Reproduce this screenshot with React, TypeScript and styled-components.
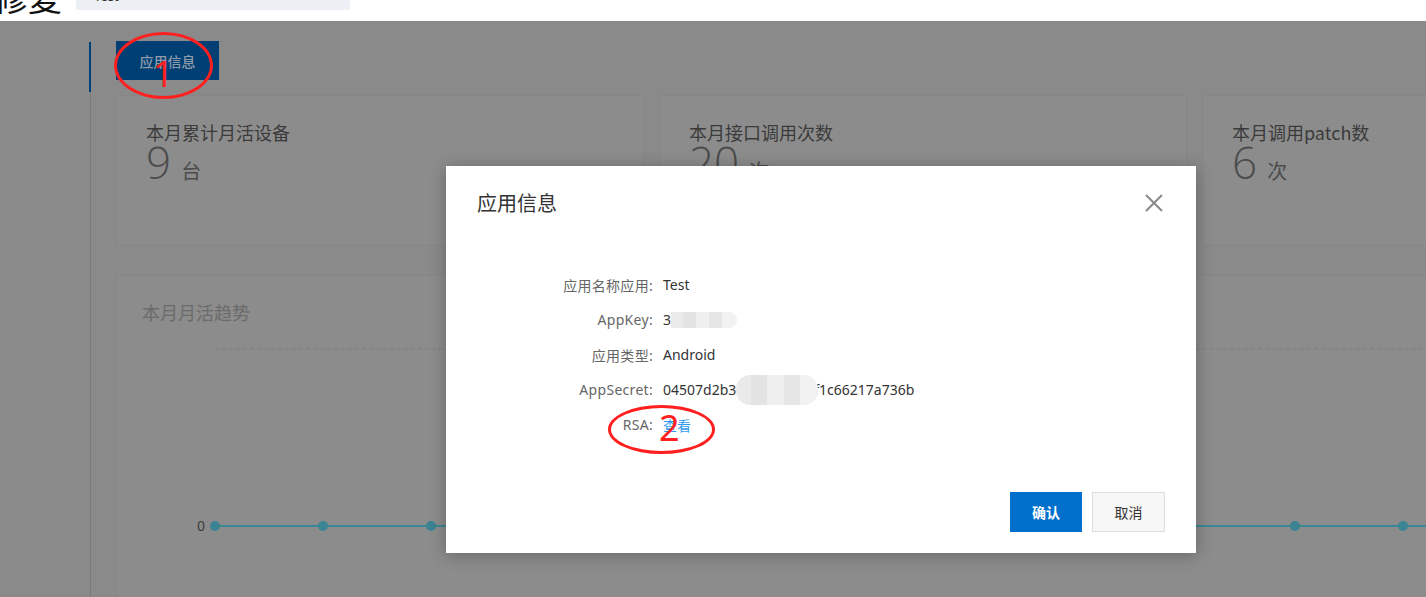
import React from 'react';
import styled, { createGlobalStyle } from 'styled-components';

const GlobalStyle = createGlobalStyle`
  html, body {
    margin: 0;
    padding: 0;
    width: 100%;
    height: 100%;
    overflow: hidden;
    background: #ffffff;
    font-family: 'Noto Sans', 'Noto Sans CJK SC', sans-serif;
  }
  * { box-sizing: border-box; }
`;

const TopStrip = styled.div`
  height: 21px;
  display: flex;
  align-items: flex-start;
  overflow: hidden;
  background: #ffffff;
`;

const PageTitle = styled.div`
  font-size: 34px;
  line-height: 34px;
  margin: -20px 0 0 -6px;
  color: #111;
  font-family: 'Noto Sans CJK SC', sans-serif;
`;

const SearchBox = styled.div`
  width: 274px;
  height: 10px;
  margin-left: 14px;
  background: #eceff4;
  overflow: hidden;
  padding-left: 18px;
  font-size: 13px;
  line-height: 13px;
  color: #333;
  span { display: block; margin-top: -10px; }
`;

const Stage = styled.div`
  position: relative;
  height: calc(100vh - 21px);
  display: flex;
  overflow: hidden;
  background: #8a8a8a;
`;

const Gutter = styled.div`
  width: 89px;
  flex-shrink: 0;
`;

const Rail = styled.div`
  width: 2px;
  margin-top: 21px;
  flex-shrink: 0;
  background: linear-gradient(#00417a, #00417a) top / 2px 50px no-repeat,
    linear-gradient(#7b7b7b, #7b7b7b) 1px 0 / 1px 100% no-repeat;
`;

const Content = styled.div`
  flex: 1;
  min-width: 0;
  padding: 20px 0 0 25px;
  display: flex;
  flex-direction: column;
  overflow: hidden;
`;

const Tab = styled.div`
  width: 103px;
  height: 39px;
  background: #003f73;
  color: #8f9bab;
  font-size: 14px;
  font-weight: 500;
  display: flex;
  align-items: center;
  justify-content: center;
  font-family: 'Noto Sans CJK SC', sans-serif;
`;

const StatRow = styled.div`
  display: grid;
  grid-template-columns: repeat(3, 528px);
  gap: 15px;
  margin-top: 15px;
`;

const StatCard = styled.div`
  height: 151px;
  background: #8c8c8c;
  border: 1px solid #868686;
  padding: 24px 29px;
`;

const StatLabel = styled.div`
  font-size: 18px;
  line-height: 24px;
  color: #3b3b3b;
  font-family: 'Noto Sans CJK SC', sans-serif;
`;

const StatValue = styled.div`
  display: flex;
  align-items: baseline;
  gap: 10px;
  color: #4c4c4c;
  margin-top: -5px;
`;

const Num = styled.span`
  font-size: 44px;
  line-height: 46px;
  font-weight: 300;
  font-family: 'Open Sans', sans-serif;
`;

const Unit = styled.span`
  font-size: 20px;
  font-family: 'Noto Sans CJK SC', sans-serif;
`;

const ChartCard = styled.div`
  width: 1400px;
  margin-top: 29px;
  flex: 1;
  background: #8c8c8c;
  border: 1px solid #868686;
  border-bottom: none;
  padding-top: 26px;
`;

const ChartTitle = styled.div`
  padding-left: 25px;
  font-size: 18px;
  line-height: 20px;
  color: #6b6b6b;
  font-family: 'Noto Sans CJK SC', sans-serif;
`;

const ChartSvg = styled.svg`
  display: block;
  margin-left: -1px;
`;

const ModalLayer = styled.div`
  position: absolute;
  inset: 0;
  padding: 145px 0 0 446px;
`;

const Modal = styled.div`
  width: 750px;
  height: 387px;
  background: #ffffff;
  box-shadow: 0 2px 16px rgba(0, 0, 0, 0.28);
  padding: 25px 31px 21px 31px;
  display: flex;
  flex-direction: column;
`;

const ModalHeader = styled.div`
  display: flex;
  align-items: center;
  justify-content: space-between;
  height: 24px;
`;

const ModalTitle = styled.div`
  font-size: 20px;
  line-height: 22px;
  color: #333;
  font-family: 'Noto Sans CJK SC', sans-serif;
`;

const CloseButton = styled.button`
  border: none;
  background: none;
  padding: 0;
  margin-right: 1px;
  width: 20px;
  height: 20px;
  display: flex;
  align-items: center;
  justify-content: center;
  cursor: pointer;
`;

const InfoGrid = styled.div`
  display: grid;
  grid-template-columns: 176px 1fr;
  grid-auto-rows: 35px;
  column-gap: 10px;
  margin-top: 52px;
  align-items: center;
  font-size: 14px;
`;

const InfoLabel = styled.div`
  text-align: right;
  color: #666;
  font-family: 'Noto Sans', 'Noto Sans CJK SC', sans-serif;
  letter-spacing: 0.3px;
`;

const InfoValue = styled.div`
  color: #333;
  display: flex;
  align-items: center;
  white-space: nowrap;
  font-family: 'Noto Sans', 'Noto Sans CJK SC', sans-serif;
`;

const Blur = styled.span<{ $w: number; $h: number; $round?: boolean }>`
  position: relative;
  display: inline-block;
  width: ${p => p.$w}px;
  height: ${p => p.$h}px;
  border-radius: ${p => (p.$round ? '14px' : '0 8px 8px 0')};
  background: linear-gradient(
    90deg,
    #eaeaea 0 18%,
    #e3e3e3 18% 38%,
    #efefef 38% 58%,
    #e6e6e6 58% 78%,
    #f2f2f2 78% 100%
  );
`;

const LinkText = styled.a`
  color: #2e9bf0;
  text-decoration: none;
  cursor: pointer;
  font-family: 'Noto Sans CJK SC', sans-serif;
`;

const Footer = styled.div`
  margin-top: auto;
  display: flex;
  justify-content: flex-end;
  gap: 10px;
`;

const Button = styled.button<{ $primary?: boolean }>`
  height: 40px;
  width: ${p => (p.$primary ? '72px' : '73px')};
  font-size: 14px;
  font-family: 'Noto Sans CJK SC', sans-serif;
  font-weight: ${p => (p.$primary ? 600 : 400)};
  border: 1px solid ${p => (p.$primary ? '#0070cc' : '#dddddd')};
  background: ${p => (p.$primary ? '#0070cc' : '#f7f7f7')};
  color: ${p => (p.$primary ? '#ffffff' : '#333333')};
  cursor: pointer;
`;

const Ring = styled.div<{ $x: number; $y: number; $w: number; $h: number }>`
  position: absolute;
  left: ${p => p.$x}px;
  top: ${p => p.$y}px;
  width: ${p => p.$w}px;
  height: ${p => p.$h}px;
  border: 3px solid #ff1f1f;
  border-radius: 50%;
  pointer-events: none;
`;

const Mark = styled.div<{ $x: number; $y: number }>`
  position: absolute;
  left: ${p => p.$x}px;
  top: ${p => p.$y}px;
  font-size: 36px;
  line-height: 36px;
  color: #ff2020;
  font-family: 'Noto Sans', sans-serif;
  pointer-events: none;
`;

const stats = [
  { label: '本月累计月活设备', value: '9', unit: '台' },
  { label: '本月接口调用次数', value: '20', unit: '次' },
  { label: '本月调用patch数', value: '6', unit: '次' },
];

const points = Array.from({ length: 12 }, (_, i) => 99 + i * 108);

export default function App() {
  return (
    <>
      <GlobalStyle />
      <TopStrip>
        <PageTitle>修复</PageTitle>
        <SearchBox><span>Test</span></SearchBox>
      </TopStrip>
      <Stage>
        <Gutter />
        <Rail />
        <Content>
          <Tab>应用信息</Tab>
          <StatRow>
            {stats.map(s => (
              <StatCard key={s.label}>
                <StatLabel>{s.label}</StatLabel>
                <StatValue>
                  <Num>{s.value}</Num>
                  <Unit>{s.unit}</Unit>
                </StatValue>
              </StatCard>
            ))}
          </StatRow>
          <ChartCard>
            <ChartTitle>本月月活趋势</ChartTitle>
            <ChartSvg width="1400" height="260" viewBox="0 0 1400 260">
              <line x1="99" y1="27" x2="1400" y2="27" stroke="#7f7f7f" strokeDasharray="4 3" />
              <text x="89" y="209" textAnchor="end" fontSize="14" fill="#3a3a3a" fontFamily="Noto Sans, sans-serif">0</text>
              <line x1="99" y1="204" x2="1400" y2="204" stroke="#3a8797" strokeWidth="2" />
              {points.map(x => (
                <circle key={x} cx={x} cy="204" r="5" fill="#3a8494" />
              ))}
            </ChartSvg>
          </ChartCard>
        </Content>

        <ModalLayer>
          <Modal>
            <ModalHeader>
              <ModalTitle>应用信息</ModalTitle>
              <CloseButton aria-label="关闭">
                <svg width="18" height="18" viewBox="0 0 18 18">
                  <path d="M1 1 L17 17 M17 1 L1 17" stroke="#888" strokeWidth="2" fill="none" />
                </svg>
              </CloseButton>
            </ModalHeader>
            <InfoGrid>
              <InfoLabel>应用名称应用:</InfoLabel>
              <InfoValue>Test</InfoValue>
              <InfoLabel>AppKey:</InfoLabel>
              <InfoValue>3<Blur $w={66} $h={16} /></InfoValue>
              <InfoLabel>应用类型:</InfoLabel>
              <InfoValue>Android</InfoValue>
              <InfoLabel>AppSecret:</InfoLabel>
              <InfoValue>
                04507d2b3
                <Blur $w={82} $h={30} $round style={{ marginRight: -4 }} />
                f1c66217a736b
              </InfoValue>
              <InfoLabel>RSA:</InfoLabel>
              <InfoValue><LinkText>查看</LinkText></InfoValue>
            </InfoGrid>
            <Footer>
              <Button $primary>确认</Button>
              <Button>取消</Button>
            </Footer>
          </Modal>
        </ModalLayer>

        <Ring $x={114} $y={11} $w={99} $h={67} />
        <Mark $x={153} $y={35}>1</Mark>
        <Ring $x={608} $y={384} $w={107} $h={49} />
        <Mark $x={659} $y={389}>2</Mark>
      </Stage>
    </>
  );
}
